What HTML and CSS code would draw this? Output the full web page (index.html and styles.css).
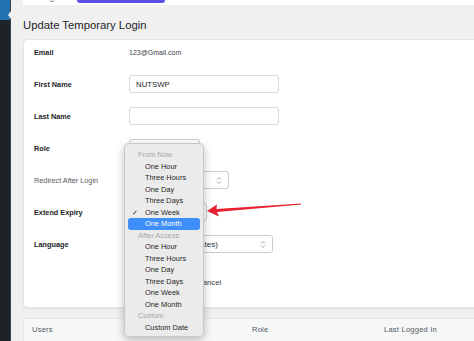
FILE: index.html
```html
<!DOCTYPE html>
<html lang="en">
<head>
  <meta charset="UTF-8">
  <title>Update Temporary Login</title>
  <link rel="stylesheet" href="styles.css">
</head>
<body>

<div class="layout">
  <aside class="sidebar">
    <div class="menu-current"></div>
  </aside>

  <main class="main">
    <div class="topbar">
      <span class="tab">Listing</span>
      <span class="tab-button"></span>
    </div>

    <h1 class="title">Update Temporary Login</h1>

    <div class="card">
      <div class="row">
        <div class="label">Email</div>
        <div class="value">123@Gmail.com</div>
      </div>
      <div class="row">
        <div class="label">First Name</div>
        <div class="input">NUTSWP</div>
      </div>
      <div class="row">
        <div class="label">Last Name</div>
        <div class="input"></div>
      </div>
      <div class="row">
        <div class="label">Role</div>
        <div class="select select-role"><span>Editor</span></div>
      </div>
      <div class="row">
        <div class="label light">Redirect After Login</div>
        <div class="select select-redirect">
          <span>Dashboard</span>
          <svg class="chevrons" width="6" height="9" viewBox="0 0 6 9"><polyline points="1,3.5 3,1.5 5,3.5"/><polyline points="1,5.5 3,7.5 5,5.5"/></svg>
        </div>
      </div>
      <div class="row">
        <div class="label">Extend Expiry</div>
        <div class="select select-expiry">
          <span>One Week</span>

          <div class="menu">
            <div class="menu-header">From Now</div>
            <div class="menu-item">One Hour</div>
            <div class="menu-item">Three Hours</div>
            <div class="menu-item">One Day</div>
            <div class="menu-item">Three Days</div>
            <div class="menu-item checked">One Week</div>
            <div class="menu-item selected">One Month</div>
            <div class="menu-header">After Access</div>
            <div class="menu-item">One Hour</div>
            <div class="menu-item">Three Hours</div>
            <div class="menu-item">One Day</div>
            <div class="menu-item">Three Days</div>
            <div class="menu-item">One Week</div>
            <div class="menu-item">One Month</div>
            <div class="menu-header">Custom</div>
            <div class="menu-item">Custom Date</div>
          </div>

          <svg class="pointer" width="100" height="20" viewBox="0 0 100 20">
            <polygon points="3,11 13,4.6 12.4,9 97,3.4 97,4.6 13,12 15,16.6"/>
          </svg>
        </div>
      </div>
      <div class="row row-last">
        <div class="label">Language</div>
        <div class="select select-language">
          <span>English (United States)</span>
          <svg class="chevrons" width="6" height="9" viewBox="0 0 6 9"><polyline points="1,3.5 3,1.5 5,3.5"/><polyline points="1,5.5 3,7.5 5,5.5"/></svg>
        </div>
      </div>
      <div class="actions">
        <span class="btn-primary">Update</span>
        <span class="cancel">Cancel</span>
      </div>
    </div>

    <div class="table-head">
      <span>Users</span>
      <span>Role</span>
      <span>Last Logged In</span>
    </div>
  </main>
</div>

</body>
</html>
```

FILE: styles.css
```css
body {
  margin: 0;
  background: #f0f0f1;
  font-family: "Liberation Sans", Arial, sans-serif;
  color: #1d2327;
  width: 474px;
  height: 341px;
  overflow: hidden;
}
.layout {
  display: flex;
  height: 341px;
}
.sidebar {
  width: 10px;
  flex: none;
  background: #1d2327;
  border-right: 1px solid #3c434a;
}
.menu-current {
  height: 20px;
  background: #2271b1;
  position: relative;
}
.menu-current::after {
  content: "";
  position: absolute;
  right: -1px;
  top: 11px;
  border-style: solid;
  border-width: 4px 3px 4px 0;
  border-color: transparent #f0f0f1 transparent transparent;
}
.main {
  flex: 1;
  min-width: 0;
  padding-left: 12px;
}
.topbar {
  display: flex;
  align-items: flex-start;
  height: 5px;
  overflow: hidden;
  background: #fff;
  margin-right: -6px;
}
.tab {
  font-size: 10px;
  line-height: 10px;
  margin: -8.5px 0 0 3px;
  color: #787c82;
}
.tab-button {
  width: 88px;
  height: 12px;
  margin: -9.5px 0 0 22px;
  background: #5b4ee6;
  border-radius: 3px;
}
.title {
  margin: 0;
  padding: 12px 0 6px;
  font-size: 11.3px;
  line-height: 16px;
  font-weight: 400;
  color: #1d2327;
}
.card {
  background: #fff;
  border: 1px solid #e4e4e7;
  border-radius: 4px;
  margin-right: -6px;
  padding: 3px 0 16px 10px;
  box-shadow: 0 1px 2px rgba(0, 0, 0, 0.06);
}
.row {
  display: grid;
  grid-template-columns: 95px auto;
  align-items: center;
  height: 18px;
  margin-bottom: 14px;
}
.row-last {
  margin-bottom: 20px;
}
.label {
  font-size: 7.3px;
  font-weight: 700;
  color: #1d2327;
}
.label.light {
  font-weight: 400;
  color: #55595e;
}
.value {
  font-size: 7px;
  color: #3c434a;
}
.input {
  width: 150px;
  height: 18px;
  box-sizing: border-box;
  border: 1px solid #dcdcde;
  border-radius: 3px;
  padding-left: 6px;
  font-size: 7.8px;
  display: flex;
  align-items: center;
}
.select {
  height: 18px;
  box-sizing: border-box;
  border: 1px solid #c9cbcf;
  border-radius: 3px;
  display: flex;
  align-items: center;
  justify-content: space-between;
  padding: 0 6px;
  font-size: 8px;
  color: #2c3338;
  position: relative;
}
.select-role { width: 71px; }
.select-redirect { width: 100px; }
.select-expiry { width: 78px; }
.select-language { width: 144px; }
.chevrons polyline {
  fill: none;
  stroke: #8c8f94;
  stroke-width: 0.8;
}
.menu {
  position: absolute;
  left: -6px;
  top: -61px;
  width: 78px;
  padding: 5px 0 3px;
  background: #ebebeb;
  border: 0.5px solid rgba(0, 0, 0, 0.15);
  border-radius: 5px;
  box-shadow: 0 3px 10px rgba(0, 0, 0, 0.25);
  z-index: 10;
}
.menu-item,
.menu-header {
  height: 11.5px;
  line-height: 11.5px;
  font-size: 7.4px;
  position: relative;
  white-space: nowrap;
}
.menu-item {
  padding-left: 20px;
  color: #1f1f1f;
}
.menu-header {
  padding-left: 13px;
  color: #a5a5a5;
}
.menu-item.checked::before {
  content: "✓";
  position: absolute;
  left: 7px;
  font-size: 7px;
}
.menu-item.selected {
  margin: 0 3px;
  padding-left: 17px;
  background: #3d8ef6;
  color: #fff;
  border-radius: 3px;
}
.pointer {
  position: absolute;
  left: 74px;
  top: -4px;
  z-index: 11;
}
.pointer polygon {
  fill: #e6202e;
}
.actions {
  display: flex;
  align-items: center;
  gap: 12px;
  height: 18px;
  margin-left: 95px;
}
.btn-primary {
  width: 56px;
  height: 18px;
  line-height: 18px;
  text-align: center;
  background: #2271b1;
  color: #fff;
  font-size: 7.8px;
  border-radius: 3px;
}
.cancel {
  font-size: 7.8px;
  color: #3c434a;
}
.table-head {
  margin-top: 10px;
  margin-right: -6px;
  height: 40px;
  box-sizing: border-box;
  padding: 6px 0 0 8px;
  background: #f6f7f7;
  border: 1px solid #e2e4e7;
  display: grid;
  grid-template-columns: 220px 132px 1fr;
  align-items: start;
  line-height: 9px;
  font-size: 7.6px;
  letter-spacing: 0.2px;
  color: #50575e;
}
```
